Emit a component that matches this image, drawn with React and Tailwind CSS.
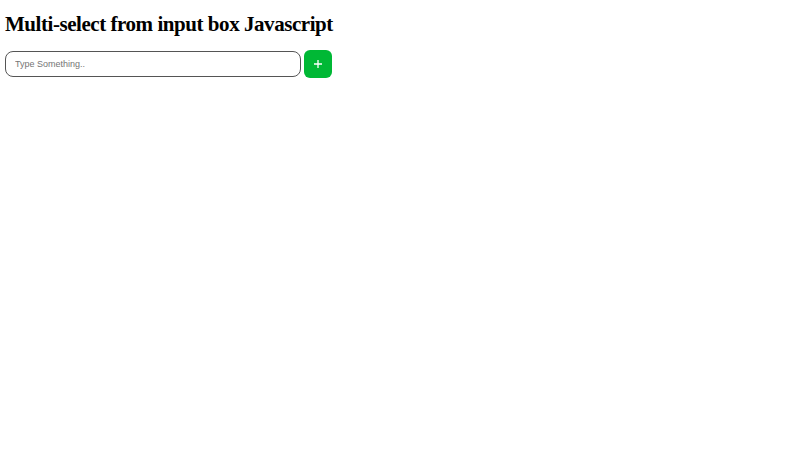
import { useState } from "react";

export default function App() {
  const [value, setValue] = useState("");

  return (
    <div className="min-h-screen bg-white p-[5px] text-black">
      <h1 className="mt-[5px] mb-[12px] text-[21px] font-bold leading-[28px] tracking-[-0.45px] font-['Liberation_Serif',serif]">
        Multi-select from input box Javascript
      </h1>

      <div className="flex items-center gap-[3px]">
        <input
          type="text"
          value={value}
          onChange={(e) => setValue(e.target.value)}
          placeholder="Type Something.."
          className="w-[296px] h-[26px] px-[9px] border border-[#555] rounded-[8px] text-[9px] font-['Liberation_Sans',sans-serif] placeholder-[#757575] focus:outline-none"
        />
        <button className="w-[28px] h-[28px] flex items-center justify-center bg-[#00b835] text-white rounded-[6px]">
          <svg width="10" height="10" viewBox="0 0 10 10" fill="none" stroke="currentColor" strokeWidth="1.3">
            <path d="M5 1v8M1 5h8" />
          </svg>
        </button>
      </div>
    </div>
  );
}
